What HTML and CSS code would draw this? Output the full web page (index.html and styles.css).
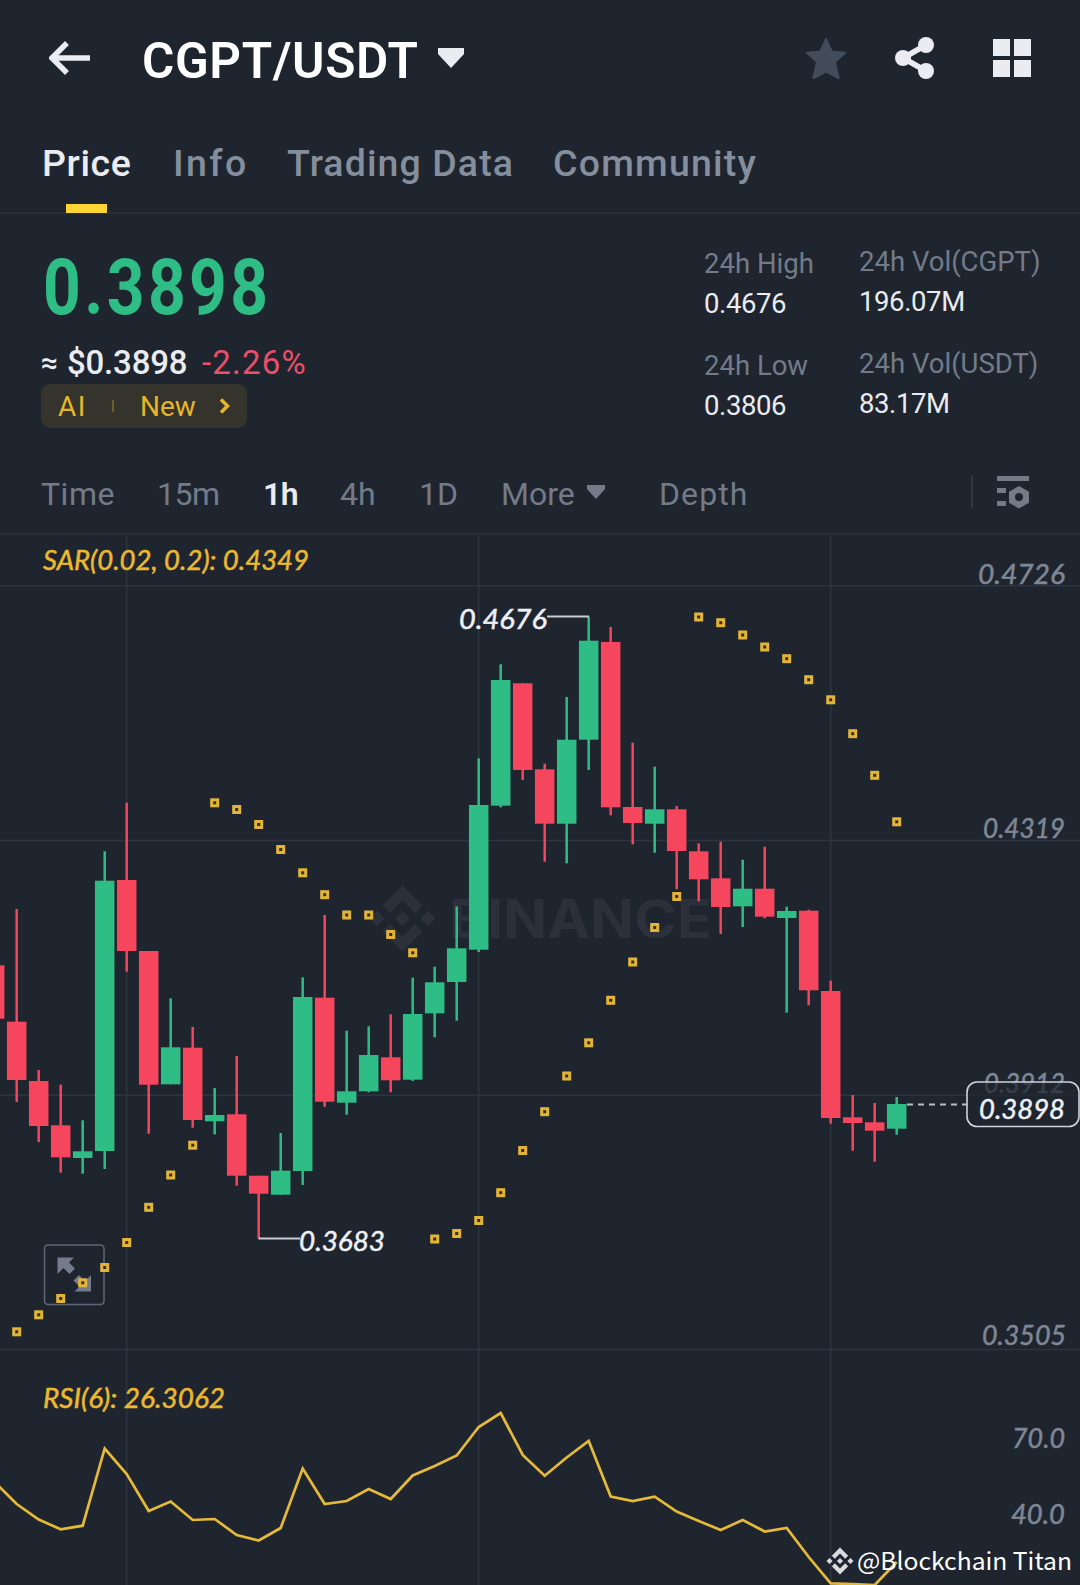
FILE: index.html
```
<!DOCTYPE html>
<html lang="en">

<head>
    <meta charset="UTF-8">
    <meta name="viewport" content="width=device-width, initial-scale=1.0">
    <title>CGPT/USDT</title>
    <link rel="stylesheet" href="styles.css">
</head>

<body>
    <header class="header">
        <svg class="back" width="42" height="34" viewBox="0 0 42 34">
            <path d="M18 2 3 17l15 15M4 17h37" />
        </svg>
        <h1>CGPT/USDT</h1>
        <svg class="caret" width="26" height="20" viewBox="0 0 26 20">
            <path d="M0 0h26v6L13 20 0 6z" />
        </svg>
        <div class="actions">
            <svg class="star" width="42" height="43" viewBox="0 0 42 43">
                <path d="M21 2l5.6 12.4 13.4 1.4-10 9.2 3.6 16L21 34.500 8.400 41 12 25 2 15.800l13.400-1.400z" />
            </svg>
            <svg class="share" width="40" height="42" viewBox="0 0 40 42">
                <path d="M31 8 8 21l23 13" />
                <circle cx="31" cy="8" r="8" />
                <circle cx="8" cy="21" r="8" />
                <circle cx="31" cy="34" r="8" />
            </svg>
            <svg class="apps" width="38" height="38" viewBox="0 0 38 38">
                <path d="M0 0h17v17H0zM21 0h17v17H21zM0 21h17v17H0zM21 21h17v17H21z" />
            </svg>
        </div>
    </header>

    <nav class="tabs">
        <a class="tab active">Price</a>
        <a class="tab info">Info</a>
        <a class="tab trading">Trading Data</a>
        <a class="tab community">Community</a>
    </nav>

    <section class="summary">
        <div class="quote">
            <div class="price">0.3898</div>
            <div class="fiat">
                <span class="approx">≈</span>
                <span class="usd">$0.3898</span>
                <span class="change">-2.26%</span>
            </div>
            <div class="tags">
                <span class="ai">AI</span>
                <i class="sep"></i>
                <span class="new">New</span>
                <svg width="11" height="16" viewBox="0 0 11 16">
                    <path d="M2 1.500 8.500 8 2 14.500" />
                </svg>
            </div>
        </div>
        <div class="stats">
            <dl>
                <dt>24h High</dt>
                <dd>0.4676</dd>
                <dt>24h Low</dt>
                <dd>0.3806</dd>
            </dl>
            <dl class="vol">
                <dt>24h Vol(CGPT)</dt>
                <dd>196.07M</dd>
                <dt>24h Vol(USDT)</dt>
                <dd>83.17M</dd>
            </dl>
        </div>
    </section>

    <nav class="intervals">
        <span class="t-time">Time</span>
        <span class="t-15m">15m</span>
        <span class="t-1h active">1h</span>
        <span class="t-4h">4h</span>
        <span class="t-1d">1D</span>
        <span class="t-more">More</span>
        <svg class="more-caret" width="18" height="14" viewBox="0 0 18 14">
            <path d="M0 0h18v4L9 14 0 4z" />
        </svg>
        <span class="t-depth">Depth</span>
        <i class="bar"></i>
        <svg class="settings" width="33" height="34" viewBox="0 0 33 34">
            <path fill-rule="evenodd" d="M0 1h32v5H0zM0 13h9v5H0zM0 26h9v5H0zM22 11l10 5.700v11L22 33.500l-10-5.800v-11zM22 18a4 4 0 1 0 0 8 4 4 0 1 0 0-8z" />
        </svg>
    </nav>

    <svg id="chart" class="chart" width="1080" height="1050" viewBox="0 535 1080 1050">
        <defs>
            <g id="logo">
                <path d="M-20-13 0-33 20-13 12.500-5.500 0-18-12.500-5.500zM-20 13-12.500 5.500 0 18 12.500 5.500 20 13 0 33zM-33 0l7.500-7.500L-18 0l-7.500 7.500zM33 0l-7.500-7.500L18 0l7.500 7.500zM-7.500 0 0-7.500 7.500 0 0 7.500z" />
            </g>
        </defs>
        <g id="grid" class="grid"></g>
        <g class="brand">
            <use href="#logo" x="402.500" y="918.500" />
            <text x="449" y="937.500" textLength="263" lengthAdjust="spacingAndGlyphs">BINANCE</text>
        </g>

        <g class="expand">
            <rect x="44.500" y="1245" width="59.500" height="59.500" rx="3.500" />
            <path d="M57.500 1257.500h16.500l-5 5 6 6-5.500 5.500-6-6-6 6zM91 1291.500H74.500l5-5-6-6 5.500-5.500 6 6 6-6z" />
        </g>

        <g id="candles"></g>
        <g id="sar" class="sar"></g>
        <polyline id="rsi" class="rsi" />

        <path class="leader" d="M547 616.500h42M258.500 1238.500H300" />
        <g class="hand mark">
            <text x="459" y="628.500" textLength="88" lengthAdjust="spacingAndGlyphs">0.4676</text>
            <text x="299" y="1250.500" textLength="86" lengthAdjust="spacingAndGlyphs">0.3683</text>
        </g>
        <g class="hand indicator">
            <text x="43" y="570" textLength="266" lengthAdjust="spacingAndGlyphs">SAR(0.02, 0.2): 0.4349</text>
            <text x="43" y="1407.500" textLength="182" lengthAdjust="spacingAndGlyphs">RSI(6): 26.3062</text>
        </g>
        <g class="hand axis">
            <text x="978" y="583.500" textLength="87" lengthAdjust="spacingAndGlyphs">0.4726</text>
            <text x="983" y="837.500" textLength="82" lengthAdjust="spacingAndGlyphs">0.4319</text>
            <text x="984" y="1092.500" textLength="81" lengthAdjust="spacingAndGlyphs">0.3912</text>
            <text x="982" y="1344.500" textLength="84" lengthAdjust="spacingAndGlyphs">0.3505</text>
            <text x="1012" y="1447.500" textLength="53" lengthAdjust="spacingAndGlyphs">70.0</text>
            <text x="1011" y="1523.500" textLength="54" lengthAdjust="spacingAndGlyphs">40.0</text>
        </g>

        <path class="last-line" d="M907 1104.500h60" />
        <rect class="last-box" x="967" y="1082" width="112" height="44.500" rx="10" />
        <text class="hand last" x="979" y="1118.500" textLength="86" lengthAdjust="spacingAndGlyphs">0.3898</text>

        <g class="author">
            <use href="#logo" transform="translate(840 1561) scale(.41)" />
            <text x="857" y="1570" textLength="215" lengthAdjust="spacingAndGlyphs">@Blockchain Titan</text>
        </g>
    </svg>

    <script src="script.js"></script>
</body>

</html>
```
FILE: styles.css
```
* {
    box-sizing: border-box;
}

body {
    margin: 0;
    width: 1080px;
    height: 1585px;
    overflow: hidden;
    background: #1f252f;
    color: #eaecef;
    font-family: Roboto, "Liberation Sans", sans-serif;
}

svg {
    display: block;
    flex: none;
}

/* header */
.header {
    display: flex;
    align-items: center;
    height: 116px;
    padding: 0 49px;
}

.header svg {
    fill: #eaecf1;
}

.header .back {
    fill: none;
    stroke: #eaecf1;
    stroke-width: 5.5;
}

h1 {
    margin: 0 0 0 51px;
    padding-top: 6px;
    width: 296px;
    color: #fff;
    font-size: 49.5px;
    font-weight: 600;
    line-height: 60px;
    letter-spacing: .6px;
}

.actions {
    display: flex;
    align-items: center;
    margin-left: auto;
}

.header .star {
    fill: #434c5a;
    stroke: #434c5a;
    stroke-width: 2;
    stroke-linejoin: round;
}

.share {
    margin-left: 48px;
}

.share path {
    fill: none;
    stroke: #eaecf1;
    stroke-width: 5.5;
}

.apps {
    margin-left: 58px;
}

/* tabs */
.tabs {
    display: flex;
    height: 98px;
    padding-left: 42px;
    border-bottom: 2px solid #282f39;
    color: #848e9c;
    font-size: 37.5px;
    font-weight: 500;
    line-height: 95px;
    letter-spacing: 1.2px;
    white-space: nowrap;
}

.tab {
    position: relative;
}

.tab.active {
    width: 131px;
    color: #eaecf1;
    letter-spacing: .6px;
}

.tab.active::after {
    content: "";
    position: absolute;
    left: 24px;
    bottom: -1px;
    width: 41px;
    height: 9px;
    background: #fcd535;
}

.tab.info {
    width: 114px;
    letter-spacing: 2.4px;
}

.trading {
    width: 266px;
    letter-spacing: 1.1px;
}

/* price and 24h stats */
.summary {
    display: flex;
    height: 241px;
    padding-left: 41px;
}

.quote {
    width: 663px;
    padding-top: 36px;
}

.price {
    margin-left: 1.5px;
    color: #2ebd85;
    font-size: 77px;
    font-weight: 700;
    line-height: 76px;
    letter-spacing: 4px;
    transform: scaleX(.855);
    transform-origin: left;
}

.fiat {
    display: flex;
    margin-top: 17px;
    font-size: 33px;
    font-weight: 500;
    line-height: 40px;
}

.approx {
    width: 26px;
    font-size: 30px;
}

.usd {
    width: 135px;
    letter-spacing: -.2px;
}

.change {
    color: #e9506a;
    font-weight: 450;
    letter-spacing: 1.2px;
}

.tags {
    display: flex;
    align-items: center;
    width: 206px;
    height: 44px;
    margin-top: 1px;
    padding-left: 17px;
    border-radius: 9px;
    background: #35342c;
    color: #e6b52c;
    font-size: 28px;
}

.ai {
    width: 54px;
    letter-spacing: 1.5px;
}

.sep {
    width: 2px;
    height: 12px;
    margin-right: 26px;
    background: #6c5c2a;
}

.new {
    width: 79px;
}

.tags svg {
    fill: none;
    stroke: #e6b52c;
    stroke-width: 3.5;
}

.stats {
    display: flex;
    padding-top: 30px;
    font-size: 27.5px;
    line-height: 40px;
    white-space: nowrap;
}

dl {
    width: 155px;
    margin: 0;
}

dl.vol {
    margin-top: -2px;
}

dt {
    color: #737b89;
}

dd {
    margin: 0 0 22px;
    letter-spacing: -.4px;
}

/* intervals */
.intervals {
    display: flex;
    align-items: center;
    height: 80px;
    padding-left: 41px;
    border-bottom: 2px solid #282f39;
    color: #737b89;
    font-size: 32px;
}

.intervals svg {
    fill: #737b89;
}

.intervals .active {
    color: #eaecf1;
    font-weight: 600;
    letter-spacing: -.6px;
}

.t-time {
    width: 116px;
    letter-spacing: .5px;
}

.t-15m {
    width: 106px;
    letter-spacing: -.5px;
}

.t-1h {
    width: 77px;
}

.t-4h {
    width: 79px;
}

.t-1d {
    width: 82px;
}

.t-more {
    width: 86px;
}

.more-caret {
    margin: -5px 54px 0 0;
}

.t-depth {
    width: 312px;
    letter-spacing: 1.1px;
}

.bar {
    width: 2px;
    height: 33px;
    margin: -5px 24px 0 0;
    background: #303743;
}

.settings {
    margin-top: -5px;
}

/* chart */
.grid {
    stroke: #2e3540;
    stroke-width: 1.5;
}

.brand {
    fill: #2b303b;
    font: 700 53px Inter, sans-serif;
}

.expand rect {
    fill: none;
    stroke: #5f6776;
    stroke-width: 1.5;
}

.expand path {
    fill: #737b8c;
}

.up {
    fill: #2ebd85;
}

.down {
    fill: #f6465d;
}

.sar rect {
    fill: #3b2c14;
    stroke: #e2b53a;
    stroke-width: 3;
}

.rsi {
    fill: none;
    stroke: #e5b93a;
    stroke-width: 2.7;
}

.leader {
    fill: none;
    stroke: #c9ccd3;
    stroke-width: 1.8;
}

.hand {
    font: italic 400 27px Lato, sans-serif;
    stroke-width: .5;
}

.mark,
.last {
    fill: #eef0f5;
    stroke: #eef0f5;
}

.indicator {
    fill: #eab92f;
    stroke: #eab92f;
}

.axis {
    fill: #7f8795;
    stroke: #7f8795;
}

.last-line {
    stroke: #b9bdc6;
    stroke-width: 1.8;
    stroke-dasharray: 6 5;
}

.last-box {
    fill: #1f252f;
    fill-opacity: .75;
    stroke: #d0d3da;
    stroke-width: 1.6;
}

.author {
    fill: #d9dbde;
    font: 24px "Noto Sans CJK SC", sans-serif;
}

.author text {
    fill: #fff;
}
```
FILE: script.js
```
// [direction, high, body top, body bottom, low], left to right
var candles = [
    ['down', 965.3, 965.3, 1018.7, 1018.7],
    ['down', 909, 1021.7, 1080, 1102],
    ['down', 1070, 1081, 1126, 1142],
    ['down', 1084.7, 1125.3, 1157.3, 1172.7],
    ['up', 1120.3, 1151.3, 1158, 1173.7],
    ['up', 851.3, 880.7, 1151, 1169],
    ['down', 802.7, 880, 951, 971.7],
    ['down', 951, 951, 1084.7, 1133.7],
    ['up', 998.3, 1047.3, 1084.3, 1084.3],
    ['down', 1027, 1047.7, 1120, 1127.7],
    ['up', 1088, 1115, 1121.3, 1134.3],
    ['down', 1056, 1114.3, 1175.7, 1185.7],
    ['down', 1175.7, 1175.7, 1193.7, 1238.5],
    ['up', 1133, 1170.7, 1194.7, 1194.7],
    ['up', 977.3, 997, 1171, 1185],
    ['down', 915, 997.7, 1101.7, 1106.7],
    ['up', 1030.7, 1091.3, 1102.7, 1114.7],
    ['up', 1026.3, 1055, 1091.3, 1092.3],
    ['down', 1014.3, 1057.3, 1080.3, 1092.3],
    ['up', 977.7, 1014, 1079.7, 1081],
    ['up', 966.7, 982.3, 1013.3, 1037.3],
    ['up', 906.3, 948.3, 982, 1020.7],
    ['up', 758.3, 805, 949.7, 952],
    ['up', 664.3, 680, 805.7, 807.3],
    ['down', 683.3, 683.3, 770, 780],
    ['down', 763.7, 769.3, 823.7, 861.7],
    ['up', 697, 739.7, 823.7, 863.3],
    ['up', 616.7, 640.7, 739.7, 770],
    ['down', 627, 642, 807.3, 815.3],
    ['down', 742.7, 807, 823, 844.3],
    ['up', 766.7, 809.3, 823.7, 852.7],
    ['down', 806, 809.3, 851, 889.3],
    ['down', 843.3, 851.3, 879.3, 901.3],
    ['down', 841.7, 878.3, 907, 934],
    ['up', 859.7, 888.7, 906.3, 927],
    ['down', 846.7, 888.7, 916.7, 918.3],
    ['up', 906.7, 911, 918, 1012.7],
    ['down', 909.7, 910.7, 990.3, 1005.3],
    ['down', 980.7, 991, 1118, 1123.7],
    ['down', 1095, 1117.3, 1123, 1150.7],
    ['down', 1103, 1122.3, 1130.7, 1161.7],
    ['up', 1097, 1104, 1128.7, 1134.7]
]

// each run starts at the given candle
var sarRuns = [
    [1, [1331.8, 1314.8, 1298.5, 1282.8, 1267.5, 1242.5, 1207.3, 1175, 1145.2]],
    [10, [802.8, 809.5, 824.5, 849.5, 872.8, 894.7, 915, 915, 934.5, 952.8]],
    [20, [1239, 1233.5, 1220.5, 1192.7, 1150.5, 1111.7, 1076, 1042.8, 1000.3, 962, 927.5, 896.5]],
    [32, [617, 622.7, 635, 647, 658.7, 679.7, 699.8, 733.7, 775.3, 821.8]]
]

var rsi = [1482, 1504, 1519.5, 1529.3, 1525.7, 1448.5, 1474, 1511, 1501.5, 1520, 1519, 1535, 1540.5,
    1528, 1468.5, 1504, 1501, 1489, 1499, 1475.5, 1466, 1455.5, 1427, 1413, 1455, 1475.7, 1457.5,
    1441, 1496.5, 1501, 1496.7, 1511.5, 1521, 1530, 1520, 1531.5, 1528, 1557, 1583.3, 1584, 1585, 1562]

var STEP = 22
var BODY = 19.5

function x(i) {
    return -5.3 + i * STEP
}

function rect(cls, left, top, w, h) {
    return '<rect class="' + cls + '" x="' + left + '" y="' + top + '" width="' + w + '" height="' + h + '"/>'
}

function drawGrid() {
    var html = ''
    var cols = [126.7, 478.7, 830.7]
    var rows = [585.7, 840.5, 1095.3, 1349.6]
    cols.forEach(function (c) {
        html += '<path d="M' + c + ' 535V1585"/>'
    })
    rows.forEach(function (r) {
        html += '<path d="M0 ' + r + 'H1080"/>'
    })
    document.getElementById('grid').innerHTML = html
}

function drawCandles() {
    var html = ''
    candles.forEach(function (c, i) {
        html += rect(c[0], x(i) - 1.25, c[1], 2.5, c[4] - c[1])
        html += rect(c[0], x(i) - BODY / 2, c[2], BODY, c[3] - c[2])
    })
    document.getElementById('candles').innerHTML = html
}

function drawSar() {
    var html = ''
    sarRuns.forEach(function (run) {
        run[1].forEach(function (y, i) {
            html += rect('dot', x(run[0] + i) - 3, y - 3, 6, 6)
        })
    })
    document.getElementById('sar').innerHTML = html
}

function drawRsi() {
    var points = rsi.map(function (y, i) {
        return x(i) + ',' + y
    })
    document.getElementById('rsi').setAttribute('points', points.join(' '))
}

drawGrid()
drawCandles()
drawSar()
drawRsi()
```
